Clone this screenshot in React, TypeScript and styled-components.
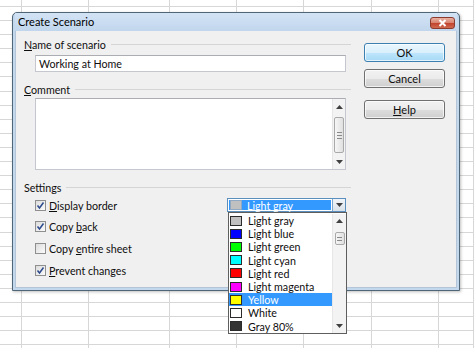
import React from 'react';
import styled, { createGlobalStyle } from 'styled-components';

const FONT = `Lato, 'Open Sans', 'Liberation Sans', sans-serif`;

const GlobalStyle = createGlobalStyle`
  html, body {
    margin: 0;
    padding: 0;
    background: #fff;
  }
`;

const Desktop = styled.div`
  position: relative;
  width: 474px;
  height: 348px;
  overflow: hidden;
  background: #fff;
  font-family: ${FONT};
  font-size: 10.7px;
  color: #0e0e0e;
`;

const Sheet = styled.div`
  display: grid;
  grid-template-columns: 22px 67px 81px 67px 67px 68px 67px 35px;
  grid-template-rows: 7px;
  grid-auto-rows: 14.1px;
`;

const Cell = styled.div`
  box-sizing: border-box;
  border-right: 1px solid #d7d7d7;
  border-bottom: 1px solid #d7d7d7;
`;

const Dialog = styled.div`
  position: absolute;
  left: 12px;
  top: 12px;
  width: 448px;
  height: 279px;
  box-sizing: border-box;
  display: flex;
  flex-direction: column;
  padding: 0 2px 2px;
  border: 1px solid #4f6677;
  border-radius: 5px 5px 0 0;
  background: #c3d7ed;
  box-shadow: 1px 1px 3px rgb(0 0 0 / 0.25);
`;

const TitleBar = styled.div`
  display: flex;
  align-items: flex-start;
  justify-content: space-between;
  height: 18px;
  padding: 0 2px 0 3px;
  background: linear-gradient(#d3e3f5, #c1d6ec);
`;

const Title = styled.span`
  line-height: 18px;
  font-size: 11px;
  color: #000;
`;

const CloseButton = styled.div`
  display: flex;
  align-items: center;
  justify-content: center;
  width: 25px;
  height: 12px;
  margin-top: 4px;
  box-sizing: border-box;
  border: 1px solid #8b3a2e;
  border-radius: 3px;
  background: linear-gradient(#eab0a2 0%, #d98672 45%, #c3442f 55%, #cf6a50 100%);
`;

const Body = styled.div`
  flex: 1;
  display: flex;
  padding: 6px 0 0 8px;
  background: #f0f0f0;
  border-left: 1px solid #b4c5d8;
  border-right: 1px solid #b4c5d8;
  border-bottom: 1px solid #b4c5d8;
`;

const LeftPane = styled.div`
  display: flex;
  flex-direction: column;
  width: 327px;
`;

const SectionHeader = styled.div<{ $gap: number }>`
  display: flex;
  align-items: center;
  gap: 5px;
  height: 14px;
  margin-top: ${(p) => p.$gap}px;

  &::after {
    content: '';
    flex: 1;
    height: 1px;
    background: #d5d5d5;
  }
`;

const Mn = styled.span`
  text-decoration: underline;
  text-underline-offset: 1px;
`;

const TextBox = styled.div<{ $gap: number; $height: number }>`
  display: flex;
  align-items: flex-start;
  justify-content: space-between;
  width: 311px;
  height: ${(p) => p.$height}px;
  margin: ${(p) => p.$gap}px 0 0 11px;
  box-sizing: border-box;
  border: 1px solid #c4c8ce;
  border-top-color: #abadb3;
  background: #fff;
`;

const TextValue = styled.span`
  padding-left: 3px;
  line-height: 15px;
`;

const ScrollBar = styled.div<{ $width: number }>`
  display: flex;
  flex-direction: column;
  align-items: center;
  align-self: stretch;
  width: ${(p) => p.$width}px;
  box-sizing: border-box;
  border-left: 1px solid #e6e6e6;
  background: #f3f3f3;
`;

const ArrowSlot = styled.div<{ $height: number }>`
  display: flex;
  align-items: center;
  justify-content: center;
  height: ${(p) => p.$height}px;
  width: 100%;
`;

const Thumb = styled.div<{ $height: number; $top: number }>`
  display: flex;
  flex-direction: column;
  align-items: center;
  justify-content: center;
  gap: 2px;
  width: 10px;
  height: ${(p) => p.$height}px;
  margin-top: ${(p) => p.$top}px;
  box-sizing: border-box;
  border: 1px solid #a9a9a9;
  border-radius: 2px;
  background: linear-gradient(90deg, #f6f6f6, #e0e0e0);
`;

const Grip = styled.div`
  width: 5px;
  height: 1px;
  background: #8a8a8a;
`;

const Spacer = styled.div`
  flex: 1;
`;

const CheckList = styled.div`
  display: flex;
  flex-direction: column;
  gap: 7.7px;
  width: 311px;
  margin: 4px 0 0 11px;
`;

const CheckRow = styled.div`
  position: relative;
  display: flex;
  align-items: center;
  gap: 3px;
  height: 14px;
`;

const Box = styled.div`
  display: flex;
  align-items: center;
  justify-content: center;
  width: 11px;
  height: 11px;
  box-sizing: border-box;
  border: 1px solid #8f8f8f;
  background: linear-gradient(135deg, #dcdcdc, #fbfbfb);
`;

const Combo = styled.div`
  position: relative;
  display: flex;
  align-items: stretch;
  width: 119px;
  height: 14px;
  margin-left: auto;
  box-sizing: border-box;
  border: 1px solid #5b8fbd;
  background: #fff;
`;

const ComboValue = styled.div`
  flex: 1;
  display: flex;
  align-items: center;
  gap: 5px;
  margin: 1px;
  padding-left: 1px;
  background: #3399ff;
  color: #fff;
`;

const ComboButton = styled.div`
  display: flex;
  align-items: center;
  justify-content: center;
  width: 13px;
  box-sizing: border-box;
  border-left: 1px solid #7aa7d2;
  background: linear-gradient(#f1f5f9, #d9e2ea);
`;

const Swatch = styled.div<{ $color: string; $border: string }>`
  width: 12px;
  height: 10px;
  box-sizing: border-box;
  border: 1px solid ${(p) => p.$border};
  background: ${(p) => p.$color};
  flex-shrink: 0;
`;

const DropList = styled.div`
  position: absolute;
  top: calc(100% + 1px);
  left: 0;
  z-index: 5;
  display: flex;
  width: 119px;
  box-sizing: border-box;
  padding-top: 1px;
  border: 1px solid #5e5e5e;
  background: #fff;
`;

const Options = styled.div`
  flex: 1;
  display: flex;
  flex-direction: column;
`;

const Option = styled.div<{ $selected?: boolean }>`
  display: flex;
  align-items: center;
  gap: 6px;
  height: 13.2px;
  padding-left: 1px;
  background: ${(p) => (p.$selected ? '#3399ff' : 'transparent')};
  color: ${(p) => (p.$selected ? '#fff' : '#0e0e0e')};
`;

const ButtonColumn = styled.div`
  display: flex;
  flex-direction: column;
  width: 81px;
  margin-left: 13px;
`;

const PushButton = styled.div<{ $gap: number; $focused?: boolean }>`
  display: flex;
  align-items: center;
  justify-content: center;
  height: 19px;
  margin-top: ${(p) => p.$gap}px;
  box-sizing: border-box;
  border: 1px solid ${(p) => (p.$focused ? '#3c7fb1' : '#707070')};
  border-radius: 3px;
  background: ${(p) =>
    p.$focused
      ? 'linear-gradient(#eaf6fd 0%, #d9f0fc 50%, #bee6fd 51%, #a7d9f5 100%)'
      : 'linear-gradient(#f2f2f2 0%, #ebebeb 50%, #dddddd 51%, #cfcfcf 100%)'};
  box-shadow: inset 0 0 0 1px rgb(255 255 255 / 0.7);
  font-size: 11px;
`;

const colors: [string, string][] = [
  ['Light gray', '#c0c0c0'],
  ['Light blue', '#0000ff'],
  ['Light green', '#00ff00'],
  ['Light cyan', '#00ffff'],
  ['Light red', '#ff0000'],
  ['Light magenta', '#ff00ff'],
  ['Yellow', '#ffff00'],
  ['White', '#ffffff'],
  ['Gray 80%', '#333333'],
];

const Tri = ({ up }: { up?: boolean }) => (
  <svg width="7" height="4" viewBox="0 0 7 4">
    <path d={up ? 'M0 4 L3.5 0 L7 4 Z' : 'M0 0 L7 0 L3.5 4 Z'} fill="#404040" />
  </svg>
);

const Check = () => (
  <svg width="9" height="9" viewBox="0 0 9 9">
    <path
      d="M1.5 4.5 L3.5 7 L7.5 1.5"
      fill="none"
      stroke="#2c4a8c"
      strokeWidth="1.5"
    />
  </svg>
);

const CheckItem = ({
  checked,
  children,
}: {
  checked: boolean;
  children: React.ReactNode;
}) => (
  <>
    <Box>{checked && <Check />}</Box>
    <span>{children}</span>
  </>
);

const ColorCombo = () => (
  <Combo>
    <ComboValue>
      <Swatch $color="#c0c0c0" $border="#8fa9c4" />
      <span>Light gray</span>
    </ComboValue>
    <ComboButton>
      <Tri />
    </ComboButton>
    <DropList>
      <Options>
        {colors.map(([name, color]) => (
          <Option key={name} $selected={name === 'Yellow'}>
            <Swatch $color={color} $border="#2b2b2b" />
            <span>{name}</span>
          </Option>
        ))}
      </Options>
      <ScrollBar $width={14}>
        <ArrowSlot $height={13}>
          <Tri up />
        </ArrowSlot>
        <Thumb $height={13} $top={5}>
          <Grip />
          <Grip />
        </Thumb>
        <Spacer />
        <ArrowSlot $height={13}>
          <Tri />
        </ArrowSlot>
      </ScrollBar>
    </DropList>
  </Combo>
);

export default function App() {
  return (
    <Desktop>
      <GlobalStyle />
      <Sheet>
        {Array.from({ length: 8 * 26 }, (_, i) => (
          <Cell key={i} />
        ))}
      </Sheet>
      <Dialog>
        <TitleBar>
          <Title>Create Scenario</Title>
          <CloseButton>
            <svg width="9" height="8" viewBox="0 0 9 8">
              <path
                d="M1.5 1 L7.5 7 M7.5 1 L1.5 7"
                stroke="#fff"
                strokeWidth="2"
              />
            </svg>
          </CloseButton>
        </TitleBar>
        <Body>
          <LeftPane>
            <SectionHeader $gap={0}>
              <span>
                <Mn>N</Mn>ame of scenario
              </span>
            </SectionHeader>
            <TextBox $gap={4} $height={17}>
              <TextValue>Working at Home</TextValue>
            </TextBox>

            <SectionHeader $gap={10}>
              <span>
                <Mn>C</Mn>omment
              </span>
            </SectionHeader>
            <TextBox $gap={2} $height={72}>
              <span />
              <ScrollBar $width={13}>
                <ArrowSlot $height={16}>
                  <Tri up />
                </ArrowSlot>
                <Thumb $height={36} $top={2}>
                  <Grip />
                  <Grip />
                  <Grip />
                </Thumb>
                <Spacer />
                <ArrowSlot $height={14}>
                  <Tri />
                </ArrowSlot>
              </ScrollBar>
            </TextBox>

            <SectionHeader $gap={10}>
              <span>Settings</span>
            </SectionHeader>
            <CheckList>
              <CheckRow>
                <CheckItem checked>
                  <Mn>D</Mn>isplay border
                </CheckItem>
                <ColorCombo />
              </CheckRow>
              <CheckRow>
                <CheckItem checked>
                  Copy <Mn>b</Mn>ack
                </CheckItem>
              </CheckRow>
              <CheckRow>
                <CheckItem checked={false}>
                  Copy <Mn>e</Mn>ntire sheet
                </CheckItem>
              </CheckRow>
              <CheckRow>
                <CheckItem checked>
                  <Mn>P</Mn>revent changes
                </CheckItem>
              </CheckRow>
            </CheckList>
          </LeftPane>

          <ButtonColumn>
            <PushButton $gap={6} $focused>
              OK
            </PushButton>
            <PushButton $gap={7}>Cancel</PushButton>
            <PushButton $gap={12}>
              <span>
                <Mn>H</Mn>elp
              </span>
            </PushButton>
          </ButtonColumn>
        </Body>
      </Dialog>
    </Desktop>
  );
}
